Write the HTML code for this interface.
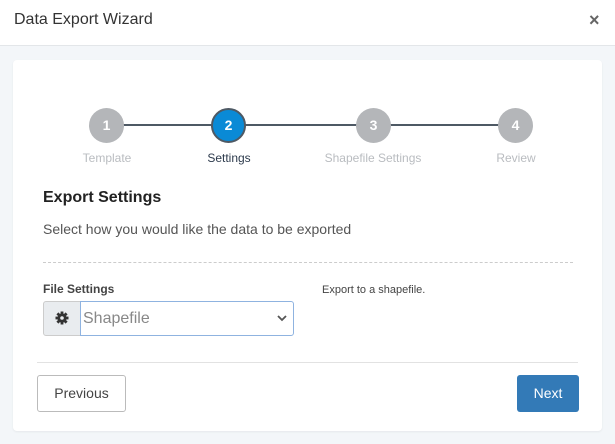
<!DOCTYPE html>
<html><head><style>
*{box-sizing:border-box;margin:0;padding:0}
body{width:615px;height:444px;background:#f3f6f9;font-family:"Liberation Sans",sans-serif;position:relative;overflow:hidden;color:#333}
.hdr{position:absolute;left:0;top:0;width:615px;height:46px;background:#fff;border-bottom:1px solid #e3e6e9}
.abs{position:absolute;white-space:nowrap}
.card{position:absolute;left:13px;top:60px;width:589px;height:371px;background:#fff;border-radius:4px;box-shadow:0 1px 2px rgba(0,0,0,.06)}
.c{position:absolute;width:35px;height:35px;border-radius:50%;background:#b4b6b9;color:#fff;font-weight:bold;font-size:14px;text-align:center;line-height:35px;top:108px}
.lbl{position:absolute;top:151px;font-size:12px;color:#b9bcc0;transform:translateX(-50%)}
</style></head><body>
<div class="hdr"></div>
<div class="abs" style="left:14px;top:11px;font-size:16px;color:#333">Data Export Wizard</div>
<div class="abs" style="left:589px;top:10px;font-size:18px;color:#666;font-weight:bold">×</div>
<div class="card"></div>
<div class="abs" style="left:107px;top:124px;width:409px;height:2px;background:#4e5964"></div>
<div class="c" style="left:89px">1</div>
<div class="c" style="left:211px;background:#0a8ad6;border:2px solid #4e5964;line-height:31px">2</div>
<div class="c" style="left:356px">3</div>
<div class="c" style="left:498px">4</div>
<div class="lbl" style="left:107px">Template</div>
<div class="lbl" style="left:229px;color:#2c3a4c">Settings</div>
<div class="lbl" style="left:373px">Shapefile Settings</div>
<div class="lbl" style="left:516px">Review</div>
<div class="abs" style="left:43px;top:189px;font-size:16px;font-weight:bold;color:#222">Export Settings</div>
<div class="abs" style="left:43px;top:221px;font-size:14px;color:#555">Select how you would like the data to be exported</div>
<div class="abs" style="left:43px;top:262px;width:530px;border-top:1px dashed #ccc"></div>
<div class="abs" style="left:43px;top:282px;font-size:12px;font-weight:bold;color:#444">File Settings</div>
<div class="abs" style="left:322px;top:284px;font-size:11px;color:#444">Export to a shapefile.</div>
<div class="abs" style="left:43px;top:301px;width:38px;height:35px;background:#e9ecef;border:1px solid #ccc;border-radius:3px 0 0 3px"></div>
<svg class="abs" style="left:55px;top:311px" width="14" height="14" viewBox="0 0 14 14"><g fill="#333"><circle cx="7" cy="7" r="4.6"/><rect x="5.6" y="0.5" width="2.8" height="13"/><rect x="0.5" y="5.6" width="13" height="2.8"/><rect x="5.6" y="0.5" width="2.8" height="13" transform="rotate(45 7 7)"/><rect x="5.6" y="0.5" width="2.8" height="13" transform="rotate(-45 7 7)"/></g><circle cx="7" cy="7" r="1.8" fill="#e9ecef"/></svg>
<div class="abs" style="left:80px;top:301px;width:214px;height:35px;border:1px solid #8fb3e0;border-radius:0 3px 3px 0;background:#fff"></div>
<div class="abs" style="left:83px;top:310px;font-size:16px;color:#888">Shapefile</div>
<svg class="abs" style="left:277px;top:314px" width="10" height="8"><path d="M1 2 L5 6 L9 2" stroke="#555" stroke-width="1.8" fill="none"/></svg>
<div class="abs" style="left:37px;top:362px;width:541px;border-top:1px solid #e2e2e2"></div>
<div class="abs" style="left:37px;top:375px;width:89px;height:37px;border:1px solid #bbb;border-radius:3px;background:#fff;font-size:14px;color:#444;text-align:center;line-height:35px">Previous</div>
<div class="abs" style="left:517px;top:375px;width:62px;height:37px;border-radius:3px;background:#337ab7;font-size:14px;color:#fff;text-align:center;line-height:37px">Next</div>
</body></html>
